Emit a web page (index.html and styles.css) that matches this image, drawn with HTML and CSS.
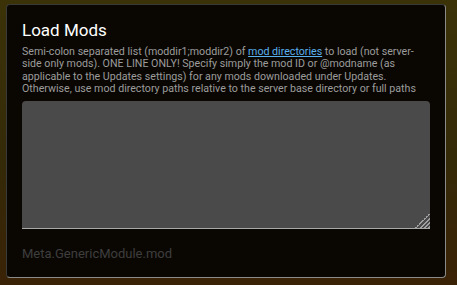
FILE: index.html
```html
<!DOCTYPE html>
<html lang="en">
<head>
  <meta charset="UTF-8" />
  <meta name="viewport" content="width=device-width, initial-scale=1.0"/>
  <title>Load Mods</title>
  <link rel="stylesheet" href="styles.css">
</head>
<body>
  <div class="dialog">
    <h2 class="dialog-title">Load Mods</h2>
    <p class="dialog-help">
      Semi-colon separated list (moddir1;moddir2) of <a href="#">mod directories</a> to load (not server-side only mods). ONE LINE ONLY! Specify simply the mod ID or @modname (as applicable to the Updates settings) for any mods downloaded under Updates. Otherwise, use mod directory paths relative to the server base directory or full paths
    </p>
    <textarea class="mods-input"></textarea>
    <div class="placeholder-hint">Meta.GenericModule.mod</div>
  </div>
</body>
</html>
```

FILE: styles.css
```css
* {
  box-sizing: border-box;
}

body {
  margin: 0;
  height: 100vh;
  overflow: hidden;
  font-family: Roboto, 'Noto Sans', sans-serif;
  background: linear-gradient(180deg, #3c3208 0%, #342a08 55%, #3a2206 100%);
  padding: 4px 11px 7px 6px;
}

.dialog {
  height: 100%;
  background: #0a0703;
  border: 1px solid #3a3a3a;
  border-right-color: #8a8a8a;
  border-bottom-color: #8a8a8a;
  border-radius: 4px;
  padding: 15px;
  display: flex;
  flex-direction: column;
}

.dialog-title {
  margin: 0;
  font-size: 17px;
  font-weight: 400;
  line-height: 20px;
  color: #fff;
}

.dialog-help {
  margin: 6px 0 5px;
  font-size: 10.65px;
  line-height: 12.4px;
  color: #9c9c9c;
}

.dialog-help a {
  color: #5ab0ee;
  text-decoration: underline;
}

.mods-input {
  display: block;
  flex-shrink: 0;
  width: 100%;
  height: 128px;
  margin: 0;
  border: none;
  border-bottom: 1px solid #a8a8a8;
  border-radius: 4px 4px 0 0;
  background: #4a4a4a;
  resize: vertical;
}

.mods-input::-webkit-resizer {
  background:
    linear-gradient(to bottom right, #4a4a4a 50%, transparent 50%),
    repeating-linear-gradient(to bottom right, #4a4a4a 0 1.5px, #a0a0a0 1.5px 3px);
}

.placeholder-hint {
  margin-top: 17px;
  font-size: 13px;
  color: #3e3e3e;
}
```
